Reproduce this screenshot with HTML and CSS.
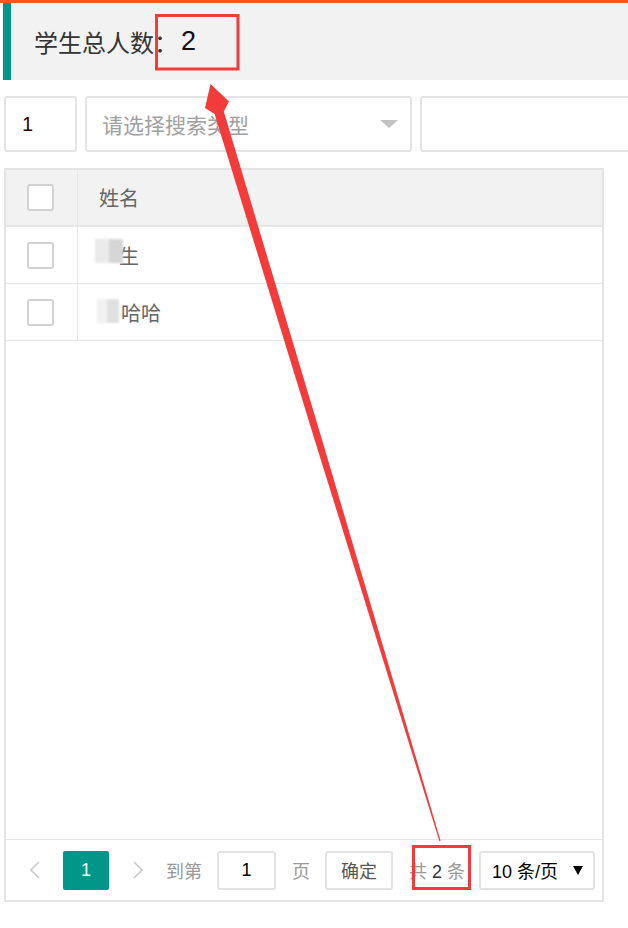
FILE: index.html
```html
<!DOCTYPE html>
<html lang="zh-CN">
<head>
<meta charset="utf-8">
<title>学生总人数</title>
<link rel="stylesheet" href="styles.css">
</head>
<body>
<div class="topbar"></div>
<div class="quote">学生总人数：<span class="quote-num">2</span></div>

<div class="search">
  <div class="inp inp-num">1</div>
  <div class="inp select">
    <span>请选择搜索类型</span>
    <span class="caret"></span>
  </div>
  <div class="inp inp-wide"></div>
</div>

<div class="table">
  <div class="row head">
    <div class="cell-check"><span class="checkbox"></span></div>
    <div class="cell-name">姓名</div>
  </div>
  <div class="row">
    <div class="cell-check"><span class="checkbox"></span></div>
    <div class="cell-name"><span class="mask mask-a"></span>生</div>
  </div>
  <div class="row">
    <div class="cell-check"><span class="checkbox"></span></div>
    <div class="cell-name"><span class="mask mask-b"></span>哈哈</div>
  </div>
  <div class="spacer"></div>
  <div class="pager">
    <svg class="chev chev-prev" viewBox="0 0 10 18" width="10" height="18"><polyline points="9,1 1,9 9,17" fill="none" stroke="#cbcbcb" stroke-width="1.6"/></svg>
    <span class="page-active">1</span>
    <svg class="chev chev-next" viewBox="0 0 10 18" width="10" height="18"><polyline points="1,1 9,9 1,17" fill="none" stroke="#cbcbcb" stroke-width="1.6"/></svg>
    <span class="pg-label pg-goto">到第</span>
    <span class="pg-input">1</span>
    <span class="pg-label pg-page">页</span>
    <span class="pg-btn">确定</span>
    <span class="pg-count">共 <b>2</b> 条</span>
    <span class="pg-limit"><span>10 条/页</span><svg class="pg-arrow" viewBox="0 0 10 9" width="10" height="9"><polygon points="0,0 10,0 5,9" fill="#000"/></svg></span>
  </div>
</div>

<svg class="annot" viewBox="0 0 628 928" width="628" height="928">
  <rect x="156.5" y="15.5" width="81.5" height="53.5" fill="none" stroke="#f33b3b" stroke-width="3"/>
  <rect x="413.5" y="846.5" width="56" height="42" fill="none" stroke="#f33b3b" stroke-width="3"/>
  <polygon fill="#f33b3b" points="210.5,84 229,101.5 223.8,111.4 321.8,439.1 440.6,840.8 439.4,841.2 315,440.9 214.6,113.9 205,108"/>
</svg>
</body>
</html>
```

FILE: styles.css
```css
html, body {
  margin: 0;
  padding: 0;
}
body {
  width: 628px;
  height: 928px;
  overflow: hidden;
  position: relative;
  background: #fff;
  font-family: "Liberation Sans", "Noto Sans CJK SC", sans-serif;
  color: #333;
}

.topbar {
  height: 3px;
  background: #ff5722;
}

.quote {
  margin-left: 3px;
  height: 77px;
  box-sizing: border-box;
  border-left: 8px solid #009688;
  background: #f2f2f2;
  display: flex;
  align-items: center;
  padding-left: 23px;
  font-size: 24px;
  color: #333;
}
.quote-num {
  margin-left: 3px;
  font-size: 27px;
  color: #111;
}

.search {
  display: flex;
  gap: 8px;
  margin: 16px 0 0 4px;
  height: 56px;
  overflow: hidden;
}
.inp {
  box-sizing: border-box;
  height: 56px;
  flex-shrink: 0;
  border: 2px solid #e4e4e4;
  border-radius: 3px;
  background: #fff;
}
.inp-num {
  width: 73px;
  padding-left: 16px;
  display: flex;
  align-items: center;
  font-size: 20px;
  color: #300;
}
.select {
  width: 327px;
  display: flex;
  align-items: center;
  justify-content: space-between;
  padding: 0 12px 0 15px;
  font-size: 21px;
  color: #a0a0a0;
}
.caret {
  width: 0;
  height: 0;
  border-left: 9px solid transparent;
  border-right: 9px solid transparent;
  border-top: 8px solid #c2c2c2;
}
.inp-wide {
  width: 260px;
}

.table {
  box-sizing: border-box;
  margin: 16px 0 0 4px;
  width: 600px;
  height: 734px;
  border: 2px solid #e4e4e4;
  display: flex;
  flex-direction: column;
}
.row {
  display: flex;
  height: 57px;
  box-sizing: border-box;
  border-bottom: 1px solid #e6e6e6;
}
.row.head {
  background: #f2f2f2;
  border-bottom: 2px solid #e6e6e6;
}
.cell-check {
  width: 72px;
  border-right: 1px solid #e6e6e6;
  display: flex;
  align-items: center;
  padding-left: 21px;
  box-sizing: border-box;
}
.checkbox {
  width: 27px;
  height: 27px;
  box-sizing: border-box;
  border: 2px solid #d2d2d2;
  border-radius: 3px;
  background: #fff;
}
.cell-name {
  display: flex;
  align-items: center;
  padding-left: 21px;
  font-size: 20px;
  color: #666;
}
.mask {
  display: inline-block;
  height: 24px;
  filter: blur(1px);
}
.mask-a {
  width: 28px;
  margin: 0 -4px 8px -4px;
  background: linear-gradient(90deg, #ebebeb 0 50%, #d6d6d6 50% 100%);
}
.mask-b {
  width: 22px;
  margin: 0 2px 2px -2px;
  background: linear-gradient(90deg, #f1f1f1 0 45%, #e0e0e0 45% 100%);
}

.spacer {
  flex: 1;
}

.pager {
  height: 61px;
  box-sizing: border-box;
  border-top: 1px solid #e4e4e4;
  display: flex;
  align-items: center;
  font-size: 18px;
}
.chev {
  flex-shrink: 0;
}
.chev-prev {
  margin-left: 24px;
}
.page-active {
  margin-left: 23px;
  width: 46px;
  height: 39px;
  border-radius: 2px;
  background: #009688;
  color: #fff;
  display: flex;
  align-items: center;
  justify-content: center;
  font-size: 18px;
}
.chev-next {
  margin-left: 24px;
}
.pg-label {
  color: #999;
}
.pg-goto {
  margin-left: 23px;
}
.pg-input {
  margin-left: 15px;
  width: 59px;
  height: 39px;
  box-sizing: border-box;
  border: 2px solid #e2e2e2;
  border-radius: 3px;
  display: flex;
  align-items: center;
  justify-content: center;
  color: #000;
}
.pg-page {
  margin-left: 16px;
}
.pg-btn {
  margin-left: 15px;
  width: 68px;
  height: 39px;
  box-sizing: border-box;
  border: 2px solid #e2e2e2;
  border-radius: 3px;
  display: flex;
  align-items: center;
  justify-content: center;
  color: #555;
}
.pg-count {
  margin-left: 16px;
  color: #999;
  white-space: pre;
}
.pg-count b {
  font-weight: normal;
  color: #333;
}
.pg-limit {
  margin-left: 14px;
  width: 116px;
  height: 39px;
  box-sizing: border-box;
  border: 2px solid #e2e2e2;
  border-radius: 3px;
  display: flex;
  align-items: center;
  justify-content: space-between;
  padding: 0 10px 0 11px;
  color: #000;
  white-space: pre;
}
.pg-arrow {
  flex-shrink: 0;
}

.annot {
  position: absolute;
  top: 0;
  left: 0;
  pointer-events: none;
}
```
